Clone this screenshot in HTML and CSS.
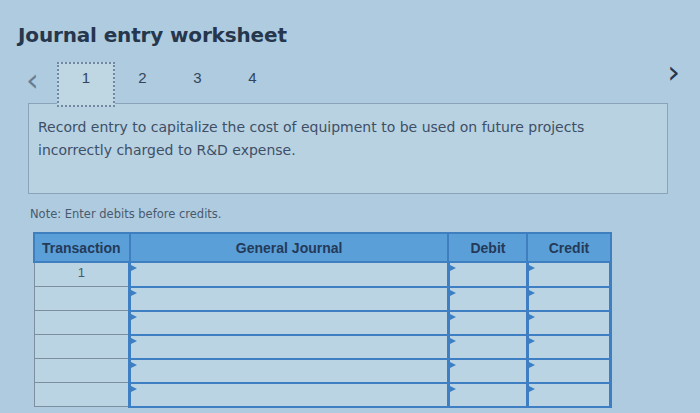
FILE: index.html
```html
<!DOCTYPE html>
<html>
<head>
<meta charset="utf-8">
<link rel="stylesheet" href="styles.css">
</head>
<body>
<div class="page">
  <h1 class="title">Journal entry worksheet</h1>
  <div class="nav">
    <span class="arrow left">&lsaquo;</span>
    <div class="tabs">
      <span class="tab active">1</span>
      <span class="tab">2</span>
      <span class="tab">3</span>
      <span class="tab">4</span>
    </div>
    <span class="arrow right">&rsaquo;</span>
  </div>
  <div class="prompt">Record entry to capitalize the cost of equipment to be used on future projects incorrectly charged to R&amp;D expense.</div>
  <div class="note">Note: Enter debits before credits.</div>
  <table class="journal">
    <thead>
      <tr><th class="c-trans">Transaction</th><th class="c-gj">General Journal</th><th class="c-dr">Debit</th><th class="c-cr">Credit</th></tr>
    </thead>
    <tbody>
      <tr><td class="t">1</td><td class="in"></td><td class="in"></td><td class="in"></td></tr>
      <tr><td class="t"></td><td class="in"></td><td class="in"></td><td class="in"></td></tr>
      <tr><td class="t"></td><td class="in"></td><td class="in"></td><td class="in"></td></tr>
      <tr><td class="t"></td><td class="in"></td><td class="in"></td><td class="in"></td></tr>
      <tr><td class="t"></td><td class="in"></td><td class="in"></td><td class="in"></td></tr>
      <tr><td class="t"></td><td class="in"></td><td class="in"></td><td class="in"></td></tr>
    </tbody>
  </table>
</div>
</body>
</html>
```
FILE: styles.css
```css
html, body {
  margin: 0;
  padding: 0;
}
body {
  width: 700px;
  height: 413px;
  overflow: hidden;
  background: #aecbdf;
  font-family: "DejaVu Sans", Verdana, sans-serif;
  color: #2b3a4e;
}
.page {
  padding: 22px 0 0 18px;
}
.title {
  margin: 0;
  font-size: 20px;
  font-weight: bold;
  color: #26364c;
  letter-spacing: -0.15px;
  line-height: 26px;
}
.nav {
  display: flex;
  align-items: flex-start;
  margin-top: 14px;
  width: 662px;
}
.arrow {
  font-size: 32px;
  line-height: 24px;
  color: #6a7d94;
  font-family: "DejaVu Sans", sans-serif;
}
.arrow.left {
  margin: 6px 0 0 8px;
  width: 31px;
}
.arrow.right {
  margin-left: auto;
  margin-top: -2px;
  color: #27384e;
}
.tabs {
  display: flex;
}
.tab {
  width: 55px;
  height: 45px;
  box-sizing: border-box;
  font-family: "Liberation Sans", Arial, sans-serif;
  font-size: 15px;
  color: #34455a;
  text-align: center;
  padding-top: 7px;
}
.tab.active {
  width: 58px;
  border: 2px dotted #7187a4;
  background: #bfd6e3;
  padding-top: 5px;
}
.prompt {
  margin: -4px 0 0 10px;
  width: 640px;
  height: 91px;
  box-sizing: border-box;
  border: 1px solid #8aa3b8;
  background: #b8d2e2;
  padding: 12px 30px 0 9px;
  font-size: 14px;
  line-height: 23px;
  color: #3e4f66;
}
.note {
  margin: 13px 0 0 12px;
  font-size: 11.5px;
  color: #4a5a6e;
}
.journal {
  margin: 11px 0 0 15px;
  border-collapse: collapse;
  width: 579px;
  font-family: "Liberation Sans", Arial, sans-serif;
}
.journal th {
  background: #5a9fd8;
  color: #243a58;
  font-size: 14px;
  font-weight: bold;
  height: 27px;
  padding: 0;
  border: 2px solid #3f7fbf;
  text-align: center;
}
.journal th.c-trans {
  width: 96px;
  text-align: left;
  padding-left: 7px;
  box-sizing: border-box;
}
.journal th.c-gj { width: 323px; }
.journal th.c-dr { width: 78px; }
.journal th.c-cr { width: 82px; }
.journal td {
  padding: 0;
  background: #bad4e3;
}
.journal td.t {
  border: 1px solid #7d8e9e;
  border-right: 2px solid #3f7fbf;
  text-align: center;
  font-size: 13px;
  color: #4a5a6e;
  vertical-align: top;
  padding-top: 2px;
  height: 21px;
}
.journal td.in {
  border: 3px solid #3d7fc2;
  border-top-width: 2px;
  border-bottom-width: 2px;
  position: relative;
}
.journal td.in::before {
  content: "";
  position: absolute;
  left: 0;
  top: 2px;
  border-left: 6px solid #3d7fc2;
  border-top: 3px solid transparent;
  border-bottom: 3px solid transparent;
}
```
